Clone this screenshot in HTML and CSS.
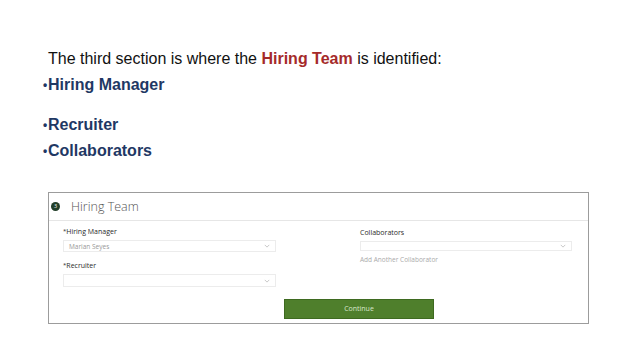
FILE: index.html
```html
<!DOCTYPE html>
<html>
<head>
<meta charset="utf-8">
<link rel="stylesheet" href="styles.css">
</head>
<body>
<div class="slide">
  <p class="intro">The third section is where the <span class="hl">Hiring Team</span> is identified:</p>
  <ul class="bullets">
    <li class="b1"><span class="dot">•</span>Hiring Manager</li>
    <li class="b2"><span class="dot">•</span>Recruiter</li>
    <li class="b3"><span class="dot">•</span>Collaborators</li>
  </ul>
  <div class="panel">
    <div class="panel-head">
      <span class="step">3</span>
      <span class="panel-title">Hiring Team</span>
    </div>
    <div class="panel-body">
      <div class="col">
        <div class="label"><span class="req">*</span>Hiring Manager</div>
        <div class="field"><span class="value">Marian Seyes</span>
          <svg class="chev" viewBox="0 0 8 5"><polyline points="1,1 4,4 7,1"/></svg></div>
        <div class="label second"><span class="req">*</span>Recruiter</div>
        <div class="field tall"><span class="value"></span>
          <svg class="chev" viewBox="0 0 8 5"><polyline points="1,1 4,4 7,1"/></svg></div>
      </div>
      <div class="col right">
        <div class="label">Collaborators</div>
        <div class="field short"><span class="value"></span>
          <svg class="chev" viewBox="0 0 8 5"><polyline points="1,1 4,4 7,1"/></svg></div>
        <div class="add">Add Another Collaborator</div>
      </div>
    </div>
    <div class="panel-foot">
      <div class="btn">Continue</div>
    </div>
  </div>
</div>
</body>
</html>
```

FILE: styles.css
```css
* { box-sizing: border-box; }
html, body { margin: 0; padding: 0; background: #fff; }
body { width: 638px; height: 359px; overflow: hidden; font-family: "Liberation Sans", Arial, sans-serif; }
.slide { padding-top: 49px; }
.intro { margin: 0 0 0 48px; font-size: 16px; line-height: 20px; color: #111; }
.hl { color: #a52a2a; font-weight: bold; }
.bullets { list-style: none; margin: 6px 0 0 43px; padding: 0; color: #1f3864; font-weight: bold; font-size: 16px; line-height: 20px; }
.bullets li { display: flex; align-items: center; }
.dot { font-size: 12px; width: 5px; line-height: 12px; margin-top: -1px; }
.b2 { margin-top: 20px; }
.b3 { margin-top: 6px; }
.panel { margin: 31px 0 0 48px; width: 541px; height: 132px; border: 1px solid #9c9c9c; display: flex; flex-direction: column; }
.panel-head { height: 28px; border-bottom: 1px solid #e6e6e6; display: flex; align-items: center; padding-left: 2px; }
.step { width: 9px; height: 9px; border-radius: 50%; background: #233f2a; color: #fff; font-size: 5.5px; line-height: 9px; text-align: center; font-family: "Open Sans", sans-serif; }
.panel-title { margin-left: 11px; font-family: "Open Sans", sans-serif; font-weight: 300; font-size: 12.5px; color: #555; }
.panel-body { display: flex; justify-content: space-between; padding: 6px 16px 0 14px; }
.col { width: 213px; display: flex; flex-direction: column; }
.col.right { width: 212px; padding-top: 1px; }
.label { font-family: "Open Sans", sans-serif; font-size: 7px; line-height: 10px; color: #2a2a2a; }
.label.second { margin-top: 9px; }
.req { font-size: 6px; vertical-align: top; line-height: 8px; }
.field { margin-top: 3px; height: 12px; border: 1px solid #ececec; display: flex; align-items: center; justify-content: space-between; padding: 0 5px 0 5px; }
.field.tall { height: 13px; }
.field.short { height: 10px; }
.value { font-family: "Open Sans", sans-serif; font-size: 6.5px; color: #999; }
.chev { width: 6px; height: 4px; fill: none; stroke: #b5b5b5; stroke-width: 1; }
.add { margin-top: 4px; font-family: "Open Sans", sans-serif; font-size: 6.5px; color: #aaa; }
.panel-foot { margin-top: auto; padding: 0 0 4px 235px; }
.btn { width: 150px; height: 20px; background: #4f7f2c; border: 1px solid #3e6a20; color: #d9e8cc; font-family: "Open Sans", sans-serif; font-size: 7px; line-height: 18px; text-align: center; }
```
